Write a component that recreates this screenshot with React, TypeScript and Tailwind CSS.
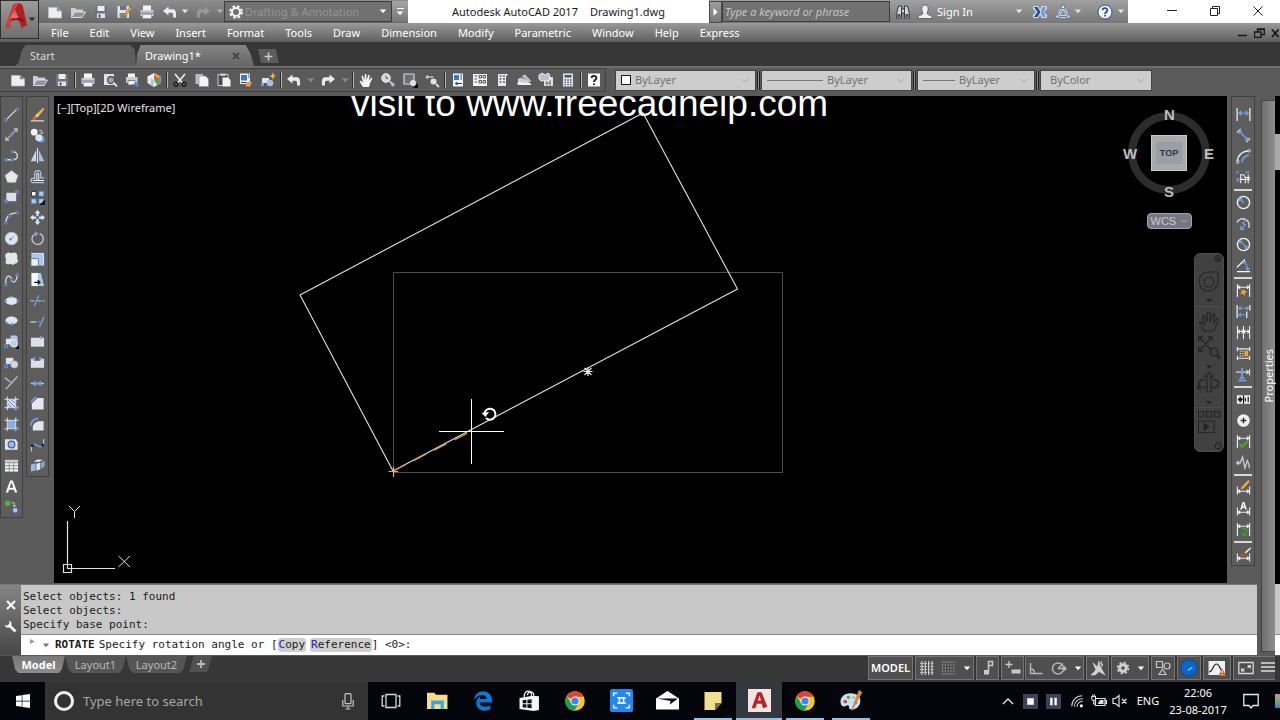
import React from "react";
import { FaWindows } from "react-icons/fa";
import { FaEdgeLegacy } from "react-icons/fa6";

const B = "#6f9fe6";
const L = "#a9c8f2";

const icons: Record<string, React.ReactNode> = {
  new: <path d="M1.5 3.5H10L14.5 7V14H1.5Z M10 3.5V7H14.5" fill="#eceef2" stroke="#b9bcc4" strokeWidth=".8" />,
  open: (
    <>
      <path d="M1 13V4H5L6.5 5.5H13V8" fill="#c9ccd4" />
      <path d="M1.3 13.5L4.5 8H15.5L12 13.5Z" fill="#8e949f" stroke="#e6e8ee" strokeWidth=".9" />
    </>
  ),
  save: (
    <>
      <path d="M2 2H14V14H2Z" fill="#6b7386" />
      <path d="M4.5 2H11.5V7H4.5Z" fill="#eceef2" />
      <path d="M4 9.5H12V14H4Z" fill="#dfe2ea" />
      <path d="M5.5 10.5H7.5V13.5H5.5Z" fill="#4a5164" />
    </>
  ),
  saveas: (
    <>
      <path d="M1.5 2H13V14H1.5Z" fill="#e2e4ea" />
      <path d="M4 2H10.5V6H4Z" fill="#6b7386" />
      <path d="M3.5 9H11V14H3.5Z" fill="#7d8597" />
      <path d="M14.5 2.5L8 10.5L7 13L9.5 11.8L16 4.2Z" fill="#f2b23c" stroke="#6b4a1c" strokeWidth=".6" />
    </>
  ),
  print: (
    <>
      <path d="M4 1.5H12V6H4Z" fill="#f4f5f8" />
      <path d="M1.5 6H14.5V12H1.5Z" fill="#c9ccd6" />
      <path d="M1.5 8.5H14.5V9.6H1.5Z" fill="#7a8090" />
      <path d="M3.5 10.5H12.5V14.5H3.5Z" fill="#f4f5f8" stroke="#7d8597" strokeWidth=".6" />
    </>
  ),
  preview: (
    <>
      <path d="M2 2H12V13H2Z" fill="#dfe2ea" />
      <circle cx="9" cy="8" r="3.4" fill="#9aa3b6" stroke="#3e434e" strokeWidth="1.1" />
      <path d="M11.5 10.5L15 14.5" stroke="#eceef2" strokeWidth="1.8" />
    </>
  ),
  publish: (
    <>
      <path d="M4 1.5H11V5H4Z" fill="#f4f5f8" />
      <path d="M2 5H13.5V11H2Z" fill="#c9ccd6" />
      <path d="M4 8.5H11V13H4Z" fill="#f4f5f8" stroke="#555b69" strokeWidth=".7" />
      <path d="M8 12H12V10L15.5 12.8L12 15.5V13.6H8Z" fill="#4f88dc" />
    </>
  ),
  dwf: (
    <>
      <path d="M8 1L14.5 4.5V11L8 15L1.5 11V4.5Z" fill="#eceef2" />
      <path d="M8 1L14.5 4.5L8 8Z" fill="#e4a33f" />
      <path d="M8 8L14.5 4.5V11L11 13Z" fill="#4fa863" />
      <path d="M8 3.5L11.5 5.5V9L8 7Z" fill="#d95748" />
      <path d="M8 8V15L4.5 12.8V6Z" fill="#b8c7e0" />
    </>
  ),
  cut: (
    <>
      <path d="M3 2L10.5 11M13 2L5.5 11" stroke="#f0f1f5" strokeWidth="1.5" />
      <circle cx="4" cy="12.3" r="2" fill="none" stroke="#15171c" strokeWidth="1.3" />
      <circle cx="12" cy="12.3" r="2" fill="none" stroke="#15171c" strokeWidth="1.3" />
    </>
  ),
  copy: (
    <>
      <path d="M1.5 2H9V12H1.5Z" fill="#b9bdc8" />
      <path d="M5 4H11.5L14.5 7V14.5H5Z" fill="#f2f3f7" stroke="#8a8f9b" strokeWidth=".6" />
    </>
  ),
  paste: (
    <>
      <path d="M2 2.5H12V13.5H2Z" fill="#4b4c50" stroke="#c9ccd6" strokeWidth="1" />
      <path d="M4.5 1.5H9.5V4H4.5Z" fill="#c9ccd6" />
      <path d="M6.5 5.5H12L14.5 8V14.5H6.5Z" fill="#f2f3f7" />
    </>
  ),
  match: (
    <>
      <path d="M2 1.5H12V12H2Z" fill="#f2f3f7" />
      <path d="M3 3H9V8.5H3Z" fill="#3e76c9" />
      <path d="M10 3H11.5M10 5H11.5M3 10.5H9" stroke="#30435f" strokeWidth="1" />
      <path d="M8 10H14L12 15L7.5 14Z" fill="#e39b4a" />
    </>
  ),
  blockedit: (
    <>
      <path d="M2 6H9V11H2Z" fill="#e0e3ec" />
      <circle cx="10" cy="11" r="3.3" fill="#a9bfe6" />
      <path d="M1 11H4V14H1Z" fill={B} />
      <path d="M13 0L13.8 3L16 3.5L13.8 5L13 8L11.8 5.2L9.5 4L12 3Z" fill="#f4b52f" />
    </>
  ),
  undo: <path d="M1 7L6.5 2.5V5.3H10.5C13.5 5.3 14.5 7.5 14 13.5H11C11.2 10 11 8.8 9.5 8.8H6.5V11.5Z" fill="#e9ebf1" />,
  redo: <path d="M15 7L9.5 2.5V5.3H5.5C2.5 5.3 1.5 7.5 2 13.5H5C4.8 10 5 8.8 6.5 8.8H9.5V11.5Z" fill="#e9ebf1" />,
  redoOff: <path d="M15 7L9.5 2.5V5.3H5.5C2.5 5.3 1.5 7.5 2 13.5H5C4.8 10 5 8.8 6.5 8.8H9.5V11.5Z" fill="#98989a" />,
  pan: (
    <path
      d="M5 15L1.5 9.5L2.5 8.5L5 10.5L3.5 4L4.8 3.5L6.5 8L6.8 2L8.3 2L8.6 8L10.4 2.8L11.8 3.2L10.8 8.8L13.2 5.5L14.3 6.3L11.8 12L11 15Z"
      fill="#f4f4f6"
    />
  ),
  zoomrt: (
    <>
      <circle cx="6" cy="6" r="4.3" fill="#d5d8e0" stroke="#eceef2" />
      <path d="M6 3.5V6.300H8.500" stroke="#5c6270" fill="none" />
      <path d="M9.5 9.5L12 11.500" stroke="#c9ccd4" strokeWidth="1.8" />
      <path d="M11.500 10.500L15 11.500L13.500 15L11 13.500Z" fill="#b9bdc8" />
    </>
  ),
  zoomwin: (
    <>
      <path d="M2 2H12V12H2Z" fill="#6b6e75" stroke="#d5d8e0" strokeWidth="1.2" />
      <circle cx="11" cy="11" r="3" fill="#dfe2ea" />
      <path d="M11 16H16V11Z" fill="#0a0a0a" />
    </>
  ),
  zoomprev: (
    <>
      <path d="M0.5 5L4.5 1.5V3.8H10V6.3H4.5V8.5Z" fill="#b9bdc8" stroke="#2b2b2d" strokeWidth=".5" />
      <circle cx="9.5" cy="9.5" r="3" fill="#dfe2ea" />
      <path d="M12 12L15 15" stroke="#dfe2ea" strokeWidth="1.8" />
    </>
  ),
  props: (
    <>
      <path d="M3 1.5H13V14.5H3Z" fill="#f4f5f8" />
      <path d="M4 3H9V8H4Z" fill="#3e76c9" />
      <path d="M10.3 3H12M10.3 5H12M10.3 7H12M5 11.5H12" stroke="#2d3f5f" />
      <path d="M5 11.5L7.5 9.5V13.5Z" fill="#2d3f5f" />
    </>
  ),
  dcenter: (
    <>
      <path d="M1 2H15V14H1Z" fill="#f4f5f8" />
      <path d="M2.5 4H5M2.5 7H5M2.5 10H5M7 3.5H9.5V6H7ZM11 3.5H13.5V6H11ZM7 8.5H9.5V11H7ZM11 8.5H13.5V11H11Z" stroke="#4d5468" fill="none" />
    </>
  ),
  palette: (
    <>
      <path d="M4 2H14L12 5V14H4Z" fill="#e8eaf0" />
      <path d="M5.5 4H7.5M9 4H11M5.5 7H7.5M9 7H11M5.5 10H7.5M9 10H11" stroke="#5c6270" strokeWidth="1.4" />
    </>
  ),
  sheet: (
    <>
      <path d="M1 11.500L3 9L14 11L15.500 13H2.500Z" fill="#f4f5f8" />
      <path d="M2 7.500L5 6L12 10L10 11.500L3 10Z" fill="#c5c9d3" stroke="#f4f5f8" strokeWidth=".7" />
      <path d="M6.500 4L9 3L14.500 9L12 10.500Z" fill="#aeb4c2" stroke="#f4f5f8" strokeWidth=".7" />
    </>
  ),
  markup: (
    <>
      <path d="M6 5H15V14H6Z" fill="#dfe2ea" />
      <path d="M1 3L4 1L7 3L10 1L12 3L11 6L12 8L9 9L6 9L3 9L1 7Z" fill="#b9c0ce" stroke="#fff" strokeWidth=".8" />
      <path d="M2 13L6 9M7 11H13M9 9V14M12 8V14" stroke="#555b69" strokeWidth=".8" />
    </>
  ),
  calc: (
    <>
      <path d="M3 1.5H13V14.5H3Z" fill="#dfe2ea" />
      <path d="M4.5 3H11.5V5.5H4.5Z" fill="#4d5468" />
      <path d="M4.5 8H6M7.3 8H8.8M10 8H11.5M4.5 10.3H6M7.3 10.3H8.8M10 10.3H11.5M4.5 12.6H6M7.3 12.6H8.8M10 12.6H11.5" stroke="#4d5468" strokeWidth="1.3" />
    </>
  ),
  help: (
    <>
      <path d="M2 1.5H14V14.5H2Z" fill="#fafafc" />
      <path d="M5.6 6C5.6 3.2 10.4 3.2 10.4 6C10.4 7.8 8 7.8 8 10M8 11.4V13" fill="none" stroke="#17181c" strokeWidth="1.8" />
    </>
  ),
  line: (
    <>
      <path d="M2 14L14 2" stroke="#d9dbe0" strokeWidth="1.3" />
      <path d="M.8 12.5H3.2V15H.8ZM12.8 1H15.2V3.4H12.8Z" fill="#39598c" stroke={B} strokeWidth=".8" />
    </>
  ),
  xline: (
    <>
      <path d="M2 14L14 2M2 10.5V14H5.5M10.5 2H14V5.5" stroke="#c6c7ca" strokeWidth="1.2" fill="none" />
      <path d="M6.500 7H9V9.500H6.500Z" fill="#39598c" stroke={B} />
    </>
  ),
  pline: (
    <>
      <path d="M2 12.5H9C16 12.5 16 4 9 4" stroke="#d9dbe0" strokeWidth="1.4" fill="none" />
      <path d="M.8 11.3H3.2V13.7H.8ZM7.5 2.8H10V5.2H7.5ZM7.5 11.3H10V13.7H7.5Z" fill="#39598c" stroke={B} strokeWidth=".8" />
    </>
  ),
  polygon: <path d="M8 1.5L15 6.8L12.3 14.5H3.7L1 6.8Z" fill="#e6e8f0" stroke="#9ea3b0" strokeWidth=".6" />,
  rect: (
    <>
      <path d="M2.5 4H13V13H2.5Z" fill="#dcdfe9" />
      <path d="M1 11.8H3.5V14.3H1ZM12.5 2H15V4.5H12.5Z" fill="#39598c" stroke={B} />
    </>
  ),
  arc: (
    <>
      <path d="M2 14C2 7 6 3 14 3" fill="none" stroke="#d9dbe0" strokeWidth="1.4" />
      <path d="M.8 12.5H3.2V15H.8ZM4.3 5H6.8V7.5H4.3ZM12.8 1.8H15.2V4.2H12.8Z" fill="#39598c" stroke={B} strokeWidth=".8" />
    </>
  ),
  circle: (
    <>
      <circle cx="8" cy="8" r="6.7" fill="#e1e5ef" stroke="#b7bccb" />
      <path d="M7 9L11 5" stroke={B} />
      <circle cx="7" cy="8.8" r="1.5" fill={B} />
    </>
  ),
  cloud: (
    <path
      d="M3.5 2C5 1 6.5 2.4 8 2.4C10 1 13.5 1.5 14 4C14.5 6 13.5 7 14.6 9C15.5 12 13.5 13.5 12 13.2C10 15.4 8 14.5 6.5 13.6C4.5 14.8 1.5 14 1.6 11.5C2.8 9.5 2 8 1.4 6C.8 4 2 2.5 3.5 2Z"
      fill="#e4e6ee"
    />
  ),
  spline: (
    <>
      <path d="M2 14C1 2 7 3 8 8C9 13 14 11 14 3" fill="none" stroke="#d9dbe0" strokeWidth="1.4" />
      <path d="M.8 12.5H3.2V15H.8ZM6.8 7H9.2V9.3H6.8ZM12.8 1.8H15.2V4.2H12.8Z" fill="#39598c" stroke={B} strokeWidth=".8" />
    </>
  ),
  ellipse: (
    <>
      <ellipse cx="8" cy="8.5" rx="6.5" ry="4.2" fill="#e1e5ef" />
      <path d="M.5 7.3H3V9.7H.5ZM13 7.3H15.5V9.7H13ZM6.8 3H9.2V5.4H6.8Z" fill={B} />
    </>
  ),
  earc: (
    <>
      <ellipse cx="8" cy="8" rx="6.5" ry="4.2" fill="#e1e5ef" />
      <path d="M2 9.3H4.6V11.8H2ZM7 10.5H9.6V13H7Z" fill={B} />
    </>
  ),
  insert: (
    <>
      <path d="M7 1.5H13L14.5 3V8H7Z" fill={L} />
      <path d="M2 5H9V11H2Z" fill="#dfe2ea" />
      <circle cx="10.5" cy="10" r="4" fill="#c3cde0" stroke="#f0f2f7" strokeWidth=".7" />
      <path d="M.8 11.5H3.8V14.5H.8Z" fill="#2c5aa3" stroke={B} />
      <path d="M12 16H16V12Z" fill="#080808" />
    </>
  ),
  block: (
    <>
      <path d="M2 3H10V9.5H2Z" fill="#dfe2ea" />
      <circle cx="11" cy="10" r="4" fill="#d3d8e5" stroke="#8a90a0" strokeWidth=".6" />
      <path d="M.8 10.5H3.8V13.5H.8Z" fill="#2c5aa3" stroke={B} />
    </>
  ),
  point: (
    <>
      <path d="M1 3L8 8.5L14.5 1.5M8 8.5L2 15" stroke="#c6c7ca" strokeWidth="1.3" fill="none" />
      <circle cx="8.3" cy="8" r="1.6" fill={B} />
    </>
  ),
  hatch: (
    <>
      <path d="M4 4H12V12H4Z" fill="#d5e3f8" />
      <path d="M4 8L8 12M4 4L12 12M8 4L12 8" stroke="#5c80b8" />
      <path d="M3.5 .5V15M12.5 .5V15M.5 3.5H15.5M.5 12.5H15.5" stroke="#e9ebf0" strokeWidth="1" />
      <path d="M11 15L15 11" stroke={B} strokeWidth="1.5" />
    </>
  ),
  gradient: (
    <>
      <path d="M4 4H12V12H4Z" fill="#86aee8" />
      <path d="M3.5 .5V15M12.5 .5V15M.5 3.5H15.5M.5 12.5H15.5" stroke="#e9ebf0" strokeWidth="1" />
      <path d="M11 15L15 11" stroke={B} strokeWidth="1.5" />
    </>
  ),
  region: (
    <>
      <path d="M1 2.5H12L14.5 5V13.5H1Z" fill="#e1e4ed" />
      <circle cx="8" cy="8" r="3.6" fill="#9dbbe8" stroke="#3b5b8f" strokeWidth="1.2" />
    </>
  ),
  table: (
    <>
      <path d="M1 2H15V14.5H1Z" fill="#f2f3f6" />
      <path d="M1 5H15M1 8.2H15M1 11.4H15M5.6 5V14.5M10.3 5V14.5" stroke="#7a7f8b" strokeWidth=".9" />
      <path d="M1 2H15V4.3H1Z" fill="#c8ccd6" />
    </>
  ),
  mtext: <path d="M1.8 14.5L6.6 1.5H9.4L14.2 14.5H11.6L10.6 11.4H5.4L4.4 14.5ZM6 9.4H10L8 3.6Z" fill="#fafafa" />,
  addsel: (
    <>
      <circle cx="4" cy="4.5" r="3" fill="#5cae3a" />
      <path d="M8 4H11V8M9.5 6.5L11 8.5L12.6 6.5" stroke="#c6c7ca" fill="none" />
      <circle cx="12" cy="12" r="3" fill={L} stroke="#345b98" />
    </>
  ),
  erase: (
    <>
      <path d="M1 14.8H15" stroke="#fff" />
      <path d="M14 .8L15.3 2L9.5 9.5L7 7.5Z" fill="#f1b44a" />
      <path d="M7 7.5L9.5 9.5L7.5 11L5.8 9.4Z" fill="#f7e7d0" />
      <path d="M5.8 9.4L7.5 11C7 13.5 4.5 14.5 2.5 13.5C3.5 12.5 3 9.8 5.8 9.4Z" fill="#d6702c" />
    </>
  ),
  copyobj: (
    <>
      <circle cx="4.5" cy="4.5" r="3.6" fill="#f2f3f7" />
      <circle cx="12" cy="12" r="3.6" fill="#6e9ad8" />
      <circle cx="9.5" cy="10.5" r="3.8" fill="#d7e4f7" />
      <path d="M9.5 2.5H12.5V6M11 4.8L12.5 6.5L14 4.8" stroke="#c6c7ca" fill="none" />
    </>
  ),
  mirror: (
    <>
      <path d="M6.5 2V14H.8Z" fill="#cdd5e1" />
      <path d="M9.5 2V14H15.2Z" fill="#a8c0de" />
      <path d="M8 0V16" stroke="#dfe2ea" strokeWidth="1.2" />
    </>
  ),
  offset: (
    <>
      <path d="M15 14.500H3C.5 14.500 .5 10 3 10H5V5C5 .5 11.5 .5 11.5 5V9.5H15" fill="none" stroke={L} strokeWidth="1.3" />
      <path d="M15 12.300H4C3 12.300 3 12 7.3 12V5.5C7.3 3.8 9.3 3.8 9.3 5.5V12" fill="none" stroke="#eceef2" strokeWidth="1.1" />
    </>
  ),
  array: (
    <>
      <path d="M1.5 1.5H6.5V6.5H1.5Z" fill="#f4f5f8" stroke="#2b2b2b" />
      <path d="M9.5 1.5H14.5V6.5H9.5ZM1.5 9.5H6.5V14.5H1.5ZM9.5 9.5H14.5V14.5H9.5Z" fill={L} stroke="#5d8bd0" strokeWidth=".7" />
      <path d="M10 16H16V10Z" fill="#080808" />
    </>
  ),
  move: (
    <>
      <path d="M8 0L11 3.5H9.2V6.8H12.5V5L16 8L12.5 11V9.2H9.2V12.5H11L8 16L5 12.5H6.8V9.2H3.5V11L0 8L3.5 5V6.8H6.8V3.5H5Z" fill="#e6e8ee" />
      <path d="M6.3 6.3H9.7V9.7H6.3Z" fill="#3e76c9" />
    </>
  ),
  rotate: (
    <>
      <path d="M5 3.2A6 6 0 1 0 10.5 2.8" fill="none" stroke="#c9cbd0" strokeWidth="1.4" />
      <path d="M5 .5L9.5 2.5L5.5 6Z" fill={B} />
    </>
  ),
  scale: (
    <>
      <path d="M1.5 1.5H14.5V14.5H1.5Z" fill={L} />
      <path d="M1.5 1.5H14.5V14.5" fill="none" stroke="#dfeafa" />
      <path d="M1 7H9V15H1Z" fill="#eceef4" stroke="#49678f" strokeWidth=".8" />
    </>
  ),
  stretch: (
    <>
      <path d="M9 1H11.5L15 15H9Z" fill={L} />
      <path d="M1.5 1H9V15H1.5Z" fill="#f6f7fa" />
      <path d="M4.5 11H10.5M8.2 8.8L10.7 11L8.2 13.2" stroke="#0c0c0c" strokeWidth="1.3" fill="none" />
    </>
  ),
  trim: (
    <>
      <path d="M.5 8.5H6M8 8.5H15.5" stroke="#9db8de" strokeWidth="1.3" strokeDasharray="4 1.2" />
      <path d="M4.5 14L9.5 2.5" stroke={B} strokeWidth="1.4" />
    </>
  ),
  extend: (
    <>
      <path d="M.5 8.5H6" stroke="#d9dbe0" strokeWidth="1.3" />
      <path d="M6 8.5H11" stroke={B} strokeWidth="1.3" strokeDasharray="2 1" />
      <path d="M10 14L15 3" stroke={B} strokeWidth="1.5" />
    </>
  ),
  breakpt: (
    <>
      <path d="M1 4H15V13.5H1Z" fill="#dcdfe9" />
      <path d="M10.5 2.3H13V5H10.5Z" fill={B} />
    </>
  ),
  brk: (
    <>
      <path d="M1 4H4V6H11V4H15V13.5H1Z" fill="#dcdfe9" />
      <path d="M3.3 2.3H5.8V5H3.3ZM9.8 2.3H12.3V5H9.8Z" fill={B} />
    </>
  ),
  join: (
    <>
      <path d="M1 8H15" stroke="#c6c7ca" strokeWidth="1.5" />
      <path d="M4.5 5.5L8 8L4.5 10.5ZM11.5 5.5L8 8L11.5 10.5Z" fill={B} stroke={B} />
    </>
  ),
  chamfer: (
    <>
      <path d="M2 14.5V8L8 2H14.5V14.5Z" fill="#e4e6ee" />
      <path d="M1 6.5L6.5 1" stroke={B} strokeWidth="1.7" />
    </>
  ),
  fillet: (
    <>
      <path d="M3 14.5V11C3 7 7 4.5 10 4.5H14.5V14.5Z" fill="#e4e6ee" />
      <path d="M1 9C1 4 5 1.5 9 1.5" stroke={B} strokeWidth="2" fill="none" />
    </>
  ),
  blend: (
    <>
      <path d="M1.5 14.5V9M14.5 1V7" stroke="#c6c7ca" strokeWidth="1.2" />
      <path d="M2.5 8C6 3 9 13 13.5 8" fill="none" stroke={B} strokeWidth="1.6" />
      <circle cx="2.5" cy="8" r="1.6" fill="#10264d" />
      <circle cx="13.5" cy="7.5" r="1.6" fill="#10264d" />
    </>
  ),
  explode: (
    <>
      <path d="M1 7L6 5.5V13L1 14.5Z" fill="#9bbbe0" />
      <path d="M6.8 6L11 5V12L6.8 13.5Z" fill="#dde8f5" />
      <path d="M4 4L8 1.5L13.5 2L10 4Z" fill="#e9eef6" />
      <path d="M12 5L15.5 3V9L12 11.5Z" fill="#89aad2" />
    </>
  ),
};

const dimBase = <path d="M1.5 1V15M14.5 1V15M2 4.5H14M4.5 2.8L2 4.5L4.5 6.2M11.5 2.8L14 4.5L11.5 6.2" stroke="#eceef2" fill="none" strokeWidth="1.2" />;
const dimLow = <path d="M1.5 7V15.5M14.5 7V15.5M2 12H14M4.5 10.5L2 12L4.5 13.5M11.5 10.5L14 12L11.5 13.5" stroke="#eceef2" fill="none" strokeWidth="1.2" />;

const dims: Record<string, React.ReactNode> = {
  linear: (
    <>
      <path d="M1.2 1V15M14.8 1V15" stroke="#f2f3f6" strokeWidth="1.3" />
      <path d="M3 6.5H13M5.5 4L2.5 6.5L5.5 9ZM10.5 4L13.5 6.5L10.5 9Z" stroke={B} fill={B} />
    </>
  ),
  aligned: (
    <>
      <path d="M1 5L5 1M11 15L15 11" stroke="#eceef2" strokeWidth="1.2" />
      <path d="M3.5 3.5L12.5 12.5M3.5 6.5V3.5H6.5M12.5 9.5V12.5H9.5" stroke={B} strokeWidth="1.5" fill="none" />
    </>
  ),
  arclen: (
    <>
      <path d="M1.5 14C1.5 7 6 2.5 13.5 2" stroke="#f2f3f6" strokeWidth="1.5" fill="none" />
      <path d="M6.5 14C6.5 10 9 7.5 14 6.5" stroke={B} strokeWidth="1.8" fill="none" />
      <path d="M.8 12.5H3V15H.8ZM12.8 .8H15.2V3H12.8Z" fill="#444" stroke="#f2f3f6" strokeWidth=".8" />
    </>
  ),
  ordinate: (
    <>
      <path d="M5 14V5H8L10 8H15M5 10H15M10 8V14M13 5V14" stroke="#eceef2" fill="none" strokeWidth="1.2" />
      <path d="M1 1V4M3 1L1.5 3M1 9H3V12H1ZM10 1L14.5 4M14.5 1L10 4" stroke={B} fill="none" />
    </>
  ),
  radius: (
    <>
      <circle cx="8" cy="8" r="6.5" fill="none" stroke="#f2f3f6" strokeWidth="1.5" />
      <path d="M8.500 8.500L4.5 4.5M4 7V4H7" stroke={B} strokeWidth="1.4" fill="none" />
    </>
  ),
  jogged: (
    <>
      <path d="M1 7A6.5 6.5 0 1 1 13.5 12.5" fill="none" stroke="#d8dae0" strokeWidth="1.5" />
      <path d="M11 4L7 8L10 9.5L5.5 14M5 10.5V14.3H9" stroke={B} strokeWidth="1.3" fill="none" />
    </>
  ),
  diameter: (
    <>
      <circle cx="8" cy="8" r="6.5" fill="none" stroke="#f2f3f6" strokeWidth="1.5" />
      <path d="M4.5 4.5L11.5 11.5M4.3 7V4.3H7M11.7 9V11.7H9" stroke={B} strokeWidth="1.4" fill="none" />
    </>
  ),
  angular: (
    <>
      <path d="M1 10L9.5 1.5M1 14.5H15" stroke="#f2f3f6" strokeWidth="1.5" />
      <path d="M8 4C11 6 12.5 9 12.5 13M8 6.5V3.8H11M10.3 10.5L12.5 13L14.5 10.5" stroke={B} strokeWidth="1.3" fill="none" />
    </>
  ),
  quick: (
    <>
      {dimBase}
      <path d="M8 6L9.5 8.3L12 9L9.8 10.5L9.5 13.5L7.5 11.5L4.5 12L6 9.8L5 7.5L7.5 8.2Z" fill="#f2a52b" />
    </>
  ),
  baseline: (
    <>
      <path d="M1.2 1V15M14.8 1V7M11.5 8V15" stroke="#f2f3f6" strokeWidth="1.3" />
      <path d="M3 4.5H14M3 11.5H11M5 2.8L2.7 4.5L5 6.2ZM11.5 2.8L13.8 4.5L11.5 6.2ZM5 9.8L2.7 11.5L5 13.2Z" stroke={B} fill={B} />
    </>
  ),
  continue: <path d="M1.5 1V15M8 1V15M14.5 1V15M2 7H14M4 5L2 7L4 9M6 5L8 7L6 9M10 5L8 7L10 9M12 5L14 7L12 9" stroke="#eceef2" fill="none" strokeWidth="1.1" />,
  space: (
    <>
      <path d="M1.5 1V5.5M14.5 1V5.5M1.5 3H14.5M1.5 10.5V15M14.5 10.5V15M1.5 13H14.5" stroke="#eceef2" strokeWidth="1.2" />
      <path d="M9 5H13V11H9Z" fill="#f2a52b" />
      <path d="M4 5.5H8M4 8H8M4 10.5H8" stroke="#eceef2" strokeDasharray="1.4 1" />
    </>
  ),
  dimbreak: (
    <>
      <path d="M0 5.5H15M14.5 2V9M11 3.5L14 5.5L11 7.5" stroke="#d5d7dc" strokeWidth="1.2" fill="none" />
      <path d="M6.5 1V13M2.5 14.5H11M4 12H9" stroke={B} strokeWidth="2" />
    </>
  ),
  tolerance: (
    <>
      <path d="M1 3.5H15V12.5H1Z" fill="#f4f4f4" />
      <path d="M2 8H7M4.5 5V11M8 3.5V12.5M10 6V10M13 5V11" stroke="#101010" strokeWidth="1.3" />
      <circle cx="4.5" cy="8" r="1.8" fill="none" stroke="#101010" />
    </>
  ),
  center: (
    <>
      <circle cx="8" cy="8" r="6.7" fill="#eeeff1" />
      <path d="M8 5V11M5 8H11" stroke="#222" strokeWidth="1.5" />
    </>
  ),
  inspect: (
    <>
      {dimBase}
      <path d="M3.5 10L6.5 13.5L13 7" stroke="#4aa52c" strokeWidth="2.2" fill="none" />
    </>
  ),
  jogline: <path d="M.5 8.5H4.5L7 2L9.5 14L12 6L14 10.5V14M3 6.5L.8 8.5L3 10.5" stroke="#c9cbd0" fill="none" strokeWidth="1.4" />,
  dimedit: (
    <>
      {dimLow}
      <path d="M13 0L14.8 1.5L8 9L5 10L6 7.5Z" fill="#f0ab43" />
    </>
  ),
  dimtedit: (
    <>
      {dimLow}
      <path d="M4.5 9L7 1H9L11.5 9H9.7L9.2 7.3H6.8L6.3 9ZM7.2 5.8H8.8L8 3Z" fill="#fff" />
    </>
  ),
  dimupdate: (
    <>
      {dimBase}
      <path d="M6 8A3.5 3.5 0 0 1 12.5 8.5L13.5 7.5V11H10L11 10A2 2 0 0 0 8 9ZM6.5 11H10L9 12A2 2 0 0 0 12.5 12C12 15.5 8 15.5 7 13.5L6.5 14Z" fill="#3f9a28" />
    </>
  ),
  dimstyle: (
    <>
      {dimLow}
      <path d="M15 .5L16 1.5L10.5 7L9 5.8Z" fill="#f4efe8" />
      <path d="M9 5L11 7.2C10 10 7 11 4 10C5.5 9 5.5 5.5 9 5Z" fill="#a2582a" />
    </>
  ),
};

function Svg({ children, size = 16, box = 16 }: { children: React.ReactNode; size?: number; box?: number }) {
  return (
    <svg width={size} height={size} viewBox={`0 0 ${box} ${box}`} aria-hidden="true" className="shrink-0">
      {children}
    </svg>
  );
}

function Caret({ color = "#e4e4e4" }: { color?: string }) {
  return (
    <svg width="8" height="5" viewBox="0 0 8 5" aria-hidden="true" className="shrink-0">
      <path d="M.8 .5H7.2L4 4.300Z" fill={color} />
    </svg>
  );
}

function ToolCell({ name }: { name: string }) {
  return (
    <button aria-label={name} className="flex h-6 w-[22px] shrink-0 items-center justify-center">
      <Svg>{icons[name]}</Svg>
    </button>
  );
}

function Sep() {
  return <span className="mx-px h-4 w-[2px] shrink-0 border-r border-[#b4b4b4] bg-[#2c2c2c]" />;
}

function Grip() {
  return <div className="mx-auto h-[4px] w-[13px] shrink-0 bg-[radial-gradient(#a8a8a8_40%,transparent_45%)] bg-[length:2px_2px]" />;
}

const menus = ["File", "Edit", "View", "Insert", "Format", "Tools", "Draw", "Dimension", "Modify", "Parametric", "Window", "Help", "Express"];

function Header() {
  return (
    <header className="flex h-[42px] shrink-0 bg-linear-to-b from-[#8c8c8c] from-55% to-[#606060]">
      <button aria-label="Application menu" className="flex h-[39px] w-[39px] shrink-0 items-center justify-between border border-[#2e2e2e] bg-linear-to-b from-[#9b9b9b] to-[#6e6e6e] pr-[2px] pl-[3px]">
        <svg width="24" height="30" viewBox="0 0 24 30" aria-hidden="true" className="-mt-2">
          <path d="M1 27L9 3L15 2L7.5 19L6 27Z" fill="#d6393b" />
          <path d="M15 2L18.5 4L23 24L17.5 27L15 19L11 8Z" fill="#b01f24" />
          <path d="M6.5 20L11 15L19 18L20 21L12 19Z" fill="#8c1519" />
          <path d="M13 3L9.5 12L15 16L12 17.5L6.5 16.5Z" fill="#ef6b68" />
        </svg>
        <Caret color="#2b2b2b" />
      </button>
      <div className="flex min-w-0 flex-1 flex-col">
        <div className="flex h-[23px] shrink-0 bg-white">
          <div className="flex w-[369px] shrink-0 items-center bg-linear-to-b from-[#8d8d8d] to-[#686868] pl-1">
            {["new", "open", "save", "saveas", "print", "undo"].map((n) => (
              <button key={n} aria-label={"Quick " + n} className="flex w-[23px] items-center justify-center">
                <Svg>{icons[n]}</Svg>
              </button>
            ))}
            <Caret />
            <button aria-label="Quick redo" className="flex w-[27px] items-center justify-center">
              <Svg>{icons.redoOff}</Svg>
            </button>
            <Caret color="#b0b0b0" />
            <label className="flex h-[21px] min-w-0 flex-1 items-center gap-[2px] border border-[#3c3c3c] bg-[#717171] px-1">
              <svg width="14" height="14" viewBox="0 0 14 14" aria-hidden="true" className="shrink-0">
                <circle cx="7" cy="7" r="5.8" fill="none" stroke="#f4f4f4" strokeWidth="2.2" strokeDasharray="2.6 2" />
                <circle cx="7" cy="7" r="4" fill="none" stroke="#f4f4f4" strokeWidth="2" />
              </svg>
              <select aria-label="Workspace" className="min-w-0 flex-1 appearance-none bg-transparent text-[11px] leading-4 text-[#959595] outline-none">
                <option>Drafting &amp; Annotation</option>
              </select>
              <Caret color="#fff" />
            </label>
            <button aria-label="Customize toolbar" className="flex h-[21px] w-4 flex-col items-center justify-center gap-[2px] bg-linear-to-b from-[#a5a5a5] to-[#777]">
              <span className="h-px w-[7px] bg-white" />
              <Caret color="#fff" />
            </button>
          </div>
          <h1 className="flex flex-1 items-center justify-center gap-3 text-[11px] leading-4 text-[#1a1a1a]">
            <span>Autodesk AutoCAD 2017</span>
            <span>Drawing1.dwg</span>
          </h1>
          <div className="flex w-[419px] shrink-0 items-center bg-linear-to-b from-[#a0a0a0] to-[#787878]">
            <button aria-label="Collapse search" className="flex h-[22px] w-[13px] items-center justify-center border border-[#4a4a4a]">
              <svg width="5" height="8" viewBox="0 0 5 8" aria-hidden="true">
                <path d="M.5 0V8L4.5 4Z" fill="#fff" />
              </svg>
            </button>
            <input aria-label="Search help" placeholder="Type a keyword or phrase" className="h-[21px] w-[168px] border border-[#3c3c3c] bg-[#717171] px-[2px] text-[11px] leading-4 italic outline-none placeholder:text-[#c4c4c4]" />
            <button aria-label="Search" className="flex w-[25px] justify-center">
              <Svg>
                <path d="M2 8L3.5 2H6.5V14H1.5ZM9.5 2H12.5L14 8L14.5 14H9.5ZM6.5 5H9.5V9H6.5Z" fill="#d4d7de" stroke="#34373d" strokeWidth="1" />
                <path d="M2.5 10H5.5V13H2.5ZM10.5 10H13.5V13H10.5Z" fill="#4b4f58" />
              </Svg>
            </button>
            <button className="flex items-center gap-1 pl-[2px] text-[11px] leading-4 text-white">
              <Svg>
                <path d="M8 1C4.5 1 4.3 5 5.5 8C6.3 10 5.5 10.5 3 11.3C1 12 1 13 1 14.5H15C15 13 15 12 13 11.3C10.5 10.5 9.7 10 10.5 8C11.7 5 11.5 1 8 1Z" fill="#eef0f4" stroke="#3f444d" strokeWidth=".7" />
              </Svg>
              Sign In
            </button>
            <span className="flex flex-1 justify-end pr-[6px]">
              <Caret />
            </span>
            <button aria-label="Exchange apps" className="flex w-[22px] justify-center">
              <Svg>
                <path d="M1 2H6L8 5L10 2H15V5L12 8L15 11V14H10L8 11L6 14H1V11L4 8L1 5Z" fill="#c9d8f0" />
                <path d="M2 3H5.5L8.5 8L5.5 13H2L5.5 8Z" fill="#2a4f92" />
                <path d="M14 3H11L9.5 5.5V10.5L11 13H14L11.5 8Z" fill="#6f93cb" />
              </Svg>
            </button>
            <button aria-label="Autodesk 360" className="flex w-[23px] justify-center">
              <Svg>
                <path d="M8 3L13 12.5H3Z" fill="none" stroke="#e4ebf7" strokeWidth="2.600" strokeLinejoin="round" />
                <path d="M8 3L13 12.5H3Z" fill="none" stroke="#46628f" strokeWidth=".8" strokeLinejoin="round" />
                <path d="M6.500 1.500H9.500V4.500H6.500ZM1 11H4V14H1ZM12 11H15V14H12Z" fill="#e4ebf7" stroke="#46628f" strokeWidth=".7" />
              </Svg>
            </button>
            <Caret />
            <button aria-label="Help" className="ml-3 flex w-[22px] justify-center">
              <Svg>
                <circle cx="8" cy="8" r="7" fill="#f2f5fb" stroke="#2d4f8c" />
                <path d="M5.6 6.2C5.6 3.5 10.4 3.5 10.4 6.2C10.4 8 8 8 8 10M8 11V12.6" fill="none" stroke="#264f9c" strokeWidth="1.8" />
              </Svg>
            </button>
            <span className="mr-[3px] ml-px">
              <Caret />
            </span>
          </div>
          <div className="flex w-[152px] shrink-0 items-center pl-[22px]">
            <button aria-label="Minimize" className="flex w-[43px] justify-center pb-px">
              <svg width="10" height="10" viewBox="0 0 10 10"><path d="M0 4.500H10" stroke="#222" /></svg>
            </button>
            <button aria-label="Restore" className="flex w-[43px] justify-center pb-px">
              <svg width="10" height="10" viewBox="0 0 10 10"><path d="M.5 2.5H7.5V9.5H.5ZM2.5 2.5V.5H9.5V7.5H7.5" stroke="#222" fill="none" /></svg>
            </button>
            <button aria-label="Close" className="flex w-[43px] justify-center pb-px">
              <svg width="10" height="10" viewBox="0 0 10 10"><path d="M.5 .5L9.5 9.5M9.5 .5L.5 9.5" stroke="#222" /></svg>
            </button>
          </div>
        </div>
        <nav className="flex h-[19px] items-center gap-px bg-linear-to-b from-[#9a9a9a] to-[#5f5f5f] pl-[2px]">
          {menus.map((m) => (
            <button key={m} className="px-[10px] text-[11px] leading-4 text-white">
              {m}
            </button>
          ))}
          <div className="ml-auto flex items-center gap-[6px]">
            <button aria-label="Minimize drawing"><svg width="10" height="10" viewBox="0 0 10 10"><path d="M0 7.5H9" stroke="#151515" strokeWidth="1.500" /></svg></button>
            <button aria-label="Restore drawing"><svg width="11" height="10" viewBox="0 0 11 10"><path d="M.5 4H7V9.5H.5ZM3.5 4V.8H10.3V6.5H7M3.5 1.5H10" stroke="#151515" fill="none" strokeWidth="1.3" /></svg></button>
            <button aria-label="Close drawing"><svg width="9" height="10" viewBox="0 0 9 10"><path d="M1 1.5L7.5 9M7.5 1.5L1 9" stroke="#151515" strokeWidth="1.8" /></svg></button>
          </div>
        </nav>
      </div>
    </header>
  );
}

function FileTabs() {
  return (
    <div className="flex h-6 shrink-0 items-end bg-[#373737] pl-[15px] text-[11px] leading-4">
      <button className="h-[21px] w-[121px] bg-[#5e5e5e] pl-[15px] text-left text-[#d8d8d8] [clip-path:polygon(0_100%,3%_85%,6%_20%,9%_0,95%_0,99%_20%,100%_100%)]">Start</button>
      <div className="flex h-[21px] w-[118px] items-center justify-between bg-linear-to-b from-[#858585] to-[#666] pr-[14px] pl-[9px] text-white [clip-path:polygon(0_100%,1%_40%,4%_0,93%_0,97%_40%,100%_100%)]">
        <button>Drawing1*</button>
        <button aria-label="Close Drawing1">
          <svg width="8" height="8" viewBox="0 0 8 8"><path d="M1 1L7 7M7 1L1 7" stroke="#454545" strokeWidth="1.8" /></svg>
        </button>
      </div>
      <button aria-label="New tab" className="mb-[3px] ml-1 flex h-[14px] w-[21px] items-center justify-center bg-[#5c5c5c] [clip-path:polygon(0_0,85%_0,100%_100%,15%_100%)]">
        <svg width="9" height="9" viewBox="0 0 9 9"><path d="M4.5 .5V8.500M.5 4.5H8.500" stroke="#c9c9c9" strokeWidth="1.600" /></svg>
      </button>
    </div>
  );
}

function PropSelect({ label, value, lead, className }: { label: string; value: string; lead?: React.ReactNode; className: string }) {
  return (
    <label className={"flex h-[21px] shrink-0 items-center border border-[#454545] bg-[#cdcdcd] pr-[6px] pl-[5px] " + className}>
      {lead}
      <select aria-label={label} className="min-w-0 flex-1 appearance-none bg-transparent text-[11px] leading-4 text-[#727272] outline-none">
        <option>{value}</option>
      </select>
      <svg width="8" height="5" viewBox="0 0 8 5" aria-hidden="true"><path d="M.8 .8L4 4L7.2 .8" stroke="#a6a6a6" fill="none" /></svg>
    </label>
  );
}

function DoubleBar() {
  return <span className="mx-px h-[19px] w-[3px] shrink-0 border-x border-[#222] bg-[#8a8a8a]" />;
}

function Toolbar() {
  const group = (names: string[]) => names.map((n) => <ToolCell key={n} name={n} />);
  return (
    <div className="flex h-[30px] shrink-0 items-center border-t-2 border-[#6e6e6e] bg-[#5a5a5a] pb-1">
      <div className="flex h-6 items-center border border-l-0 border-[#404040]">
        <span className="ml-[2px] h-[14px] w-[5px] bg-[radial-gradient(#999_40%,transparent_45%)] bg-[length:2px_2px]" />
        {group(["new", "open", "save"])}
        <Sep />
        {group(["print", "preview", "publish", "dwf"])}
        <Sep />
        {group(["cut", "copy", "paste", "match", "blockedit"])}
        <Sep />
        {group(["undo"])}
        <span className="flex w-3 justify-center"><Caret color="#8e8e8e" /></span>
        {group(["redo"])}
        <span className="flex w-3 justify-center"><Caret color="#8e8e8e" /></span>
        <Sep />
        {group(["pan", "zoomrt", "zoomwin", "zoomprev"])}
        <Sep />
        {group(["props", "dcenter", "palette", "sheet", "markup", "calc"])}
        <Sep />
        {group(["help"])}
      </div>
      <span className="mx-[2px] h-[14px] w-[5px] bg-[radial-gradient(#999_40%,transparent_45%)] bg-[length:2px_2px]" />
      <PropSelect label="Color" value="ByLayer" className="w-[141px]" lead={<span className="mr-[4px] h-[10px] w-[10px] border border-[#1c1c1c] bg-white" />} />
      <DoubleBar />
      <PropSelect label="Linetype" value="ByLayer" className="w-[151px]" lead={<span className="mr-[4px] h-px w-[56px] bg-[#777]" />} />
      <DoubleBar />
      <PropSelect label="Lineweight" value="ByLayer" className="w-[118px]" lead={<span className="mr-[4px] h-px w-[32px] bg-[#777]" />} />
      <DoubleBar />
      <PropSelect label="Plot style" value="ByColor" className="w-[112px]" lead={<span className="w-[4px]" />} />
    </div>
  );
}

const drawTools = ["line", "xline", "pline", "polygon", "rect", "arc", "circle", "cloud", "spline", "ellipse", "earc", "insert", "block", "point", "hatch", "gradient", "region", "table", "mtext", "addsel"];
const modifyTools = ["erase", "copyobj", "mirror", "offset", "array", "move", "rotate", "scale", "stretch", "trim", "extend", "breakpt", "brk", "join", "chamfer", "fillet", "blend", "explode"];
const dimGroups = [
  ["linear", "aligned", "arclen", "ordinate"],
  ["radius", "jogged", "diameter", "angular"],
  ["quick", "baseline", "continue", "space", "dimbreak"],
  ["tolerance", "center", "inspect", "jogline"],
  ["dimedit", "dimtedit", "dimupdate"],
  ["dimstyle"],
];

function ToolColumn({ label, names, className }: { label: string; names: string[]; className: string }) {
  return (
    <div role="toolbar" aria-label={label} className={"flex w-[23px] shrink-0 flex-col border border-[#404040] bg-[#5d5d5d] pt-[3px] " + className}>
      <Grip />
      {names.map((n) => (
        <button key={n} aria-label={n} className="flex min-h-0 flex-1 items-center justify-center">
          <Svg size={15}>{icons[n]}</Svg>
        </button>
      ))}
    </div>
  );
}

function NavBar() {
  const s = "#262626";
  return (
    <div className="absolute top-[157px] right-[3px] flex h-[199px] w-[30px] flex-col items-center rounded-md border border-[#4c4c4c] bg-[#414141]">
      <svg width="28" height="197" viewBox="0 0 28 197" fill="none" stroke={s} strokeWidth="1.1" aria-hidden="true">
        <circle cx="23" cy="4.5" r="3" />
        <path d="M21.5 3L24.5 6M24.5 3L21.5 6" />
        <path d="M14 18H23V28A9.5 9.5 0 1 1 14 18Z" />
        <circle cx="14" cy="28" r="5" />
        <path d="M12 45.5H16L14 47.5Z" fill={s} />
        <path d="M2 52.5H26M2 153.5H26" stroke="#4d4d4d" />
        <path d="M9 77L4.5 69L6.5 68L10 71L7.5 62L9.5 61.5L12 68L12.5 58.5H14.8L15 68L18 60L20 60.7L18.5 69.5L22 64.5L23.5 66L20 74L18.5 77Z" />
        <path d="M4 83L17 97M17 83L4 97M4 87V83H8M13 83H17V87M4 93V97H8" strokeWidth="1.4" />
        <circle cx="19" cy="98" r="4" strokeWidth="1.5" />
        <path d="M22 101L25 105" strokeWidth="2.2" />
        <path d="M12 111.5H16L14 113.5Z" fill={s} />
        <path d="M14 118.5L18 122.5H16V138H12V122.5H10Z" />
        <path d="M10 125C2 127 2 132 8 133.500H11M18 125C26 127 26 133 16 134M5 130.500L2.500 133.500L6 136" strokeWidth="1.5" />
        <path d="M12 147.5H16L14 149.5Z" fill={s} />
        <path d="M3.5 157.5H8.5V163H3.5ZM11.5 157.5H16.5V163H11.5ZM19.5 157.5H24.5V163H19.5ZM3.5 167H19V178.5H3.5Z" />
        <path d="M9 169.5V176L14 172.8Z" fill={s} />
        <circle cx="23" cy="192" r="3" />
      </svg>
    </div>
  );
}

function ViewCube() {
  return (
    <div className="absolute top-2 right-[10px] flex w-[96px] flex-col items-center font-['Liberation_Sans',sans-serif]">
      <div className="relative flex h-[98px] w-[96px] items-center justify-center text-[15px] leading-none font-bold text-[#bdbdbd]">
        <div className="flex h-[82px] w-[82px] items-center justify-center rounded-full border-[8px] border-[#2c2c2c]">
          <button className="flex h-9 w-9 items-center justify-center border border-[#c8c8c8] bg-[#a9a9a9]">
            <span className="bg-[#9a9ea6] px-[4px] py-[6px] text-[9px] leading-[10px] text-[#34373d]">TOP</span>
          </button>
        </div>
        <span className="absolute top-[3px] left-[43px]">N</span>
        <span className="absolute bottom-[3px] left-[43px]">S</span>
        <span className="absolute top-[42px] left-[2px]">W</span>
        <span className="absolute top-[42px] right-[3px]">E</span>
      </div>
      <button className="mt-[11px] flex h-4 w-[45px] items-center justify-between rounded-[4px] border border-[#a5a5b0] bg-[#777781] px-[3px] text-[11px] leading-none text-[#c8c8d0]">
        WCS
        <svg width="8" height="5" viewBox="0 0 8 5" aria-hidden="true"><path d="M0 1.5H8L4 3.5Z" fill="#9a9aa6" /></svg>
      </button>
    </div>
  );
}

function Canvas() {
  return (
    <main className="relative min-w-0 flex-1 overflow-hidden bg-black">
      <svg className="absolute inset-0 h-full w-full" fill="none" stroke="#e2e2e2" aria-label="Drawing area">
        <path d="M339.5 176.5H728.5V376.5H339.5Z" stroke="#4c4c4c" />
        <path d="M339 375L246 199L589 17L683.5 193Z" strokeWidth="1.1" />
        <path d="M339 375L417 335.500" stroke="#d89a3c" strokeWidth="1.3" strokeDasharray="14 9" />
        <path d="M334.500 375.500H344M339.500 371V381" stroke="#e8b060" strokeWidth="1.2" />
        <path d="M385 335.500H450M417.5 303V368" stroke="#fff" />
        <path d="M432 322A5.5 5.5 0 1 0 430.5 317.5" stroke="#fff" strokeWidth="2" />
        <path d="M427.5 317L435 316L431.5 321Z" fill="#fff" stroke="none" />
        <path d="M529.5 275.5H538.5M534 271V280M530.5 272L537.5 279M537.5 272L530.5 279" strokeWidth="1.2" />
        <path d="M13.5 425V472.5H61M9.5 468.5H17.5V476.5H9.5Z" strokeWidth="1.2" />
        <path d="M15 410L20.5 415.5L26 410M20.5 415.5V422M64.5 460L76 471M76 460L64.5 471" />
      </svg>
      <p className="absolute -top-[13px] left-[297px] font-['Liberation_Sans',sans-serif] text-[37px] leading-[42px] whitespace-nowrap text-white">visit to www.freecadhelp.com</p>
      <p className="absolute top-1 left-[3px] text-[11px] leading-4 text-[#e4e4e4]">[−][Top][2D Wireframe]</p>
      <ViewCube />
      <NavBar />
    </main>
  );
}

function CommandLine() {
  return (
    <section aria-label="Command line" className="flex h-[71px] shrink-0 border-t border-[#7a7a7a] font-['DejaVu_Sans_Mono',monospace] text-[11px] leading-[14px] text-[#1b1b1b]">
      <div className="flex w-[21px] shrink-0 flex-col items-center bg-linear-to-b from-[#858585] to-[#474747] pt-[4px]">
        <Grip />
        <button aria-label="Close command line" className="mt-[7px]">
          <svg width="10" height="10" viewBox="0 0 10 10"><path d="M1 1L9 9M9 1L1 9" stroke="#fff" strokeWidth="2" /></svg>
        </button>
        <button aria-label="Customize command line" className="mt-[10px]">
          <svg width="13" height="13" viewBox="0 0 13 13">
            <path d="M4.5 4.5L11.5 11.5" stroke="#f2f2f2" strokeWidth="2.6" />
            <path d="M5 .8L5.5 3.8L3.8 5.5L.8 5C1 7.3 4 8.5 6 7L7.5 5C8 3 7 1 5 .8Z" fill="#f2f2f2" />
          </svg>
        </button>
      </div>
      <div className="flex min-w-0 flex-1 flex-col bg-[#c8c8c8]">
        <div className="flex-1 pt-[5px] pl-[2px] whitespace-pre">
          <p>Select objects: 1 found</p>
          <p>Select objects:</p>
          <p>Specify base point:</p>
        </div>
        <div className="flex h-[21px] items-center border-t border-[#8b8b8b] bg-white pl-[9px] whitespace-pre">
          <svg width="6" height="14" viewBox="0 0 6 14" aria-hidden="true"><path d="M0 1L5 3.5L0 6Z" fill="#78a4dc" /></svg>
          <span className="mr-[5px] ml-[6px]"><Caret color="#777" /></span>
          <b className="mr-1">ROTATE</b>
          <label htmlFor="cmd">Specify rotation angle or [</label>
          <button className="rounded-[3px] bg-[#cfcfcf] px-px"><span className="text-[#1d1dc4]">C</span>opy</button>
          <button className="ml-1 rounded-[3px] bg-[#cfcfcf] px-px"><span className="text-[#1d1dc4]">R</span>eference</button>
          <span>{"] <0>:"}</span>
          <input id="cmd" className="min-w-0 flex-1 bg-transparent pl-1 outline-none" />
        </div>
      </div>
    </section>
  );
}

const statusBox = "flex h-6 shrink-0 items-center justify-center border border-[#757575] bg-[#4f4f4f]";

function StatusBar() {
  const tab = "h-[17px] [clip-path:polygon(0_0,100%_0,94%_80%,88%_100%,12%_100%,6%_80%)]";
  return (
    <footer className="flex h-[27px] shrink-0 items-start border-t border-[#5a5a5a] bg-[#373737] text-[11px] leading-4">
      <div className="flex pl-3">
        <button className={tab + " w-[53px] bg-linear-to-b from-[#777] to-[#8d8d8d] font-bold text-white"}>Model</button>
        <button className={tab + " w-[61px] bg-[#555] text-[#b9b9b9]"}>Layout1</button>
        <button className={tab + " w-[61px] bg-[#555] text-[#b9b9b9]"}>Layout2</button>
        <button aria-label="New layout" className="ml-[2px] flex h-4 w-[23px] items-center justify-center bg-[#505050] [clip-path:polygon(20%_0,100%_0,80%_100%,0_100%)]">
          <svg width="8" height="8" viewBox="0 0 8 8"><path d="M4 0V8M0 4H8" stroke="#bbb" strokeWidth="1.8" /></svg>
        </button>
      </div>
      <div className="mr-[5px] ml-auto flex gap-[2px]">
        <button className={statusBox + " w-[45px] font-semibold text-white"}>MODEL</button>
        <div className={statusBox + " w-[59px] gap-[6px]"}>
          <Svg><path d="M3 1V15M6.3 1V15M9.6 1V15M13 1V15" stroke="#d0d0d0" strokeWidth="1.2" /><path d="M1 3.5H15M1 6.5H15M1 9.5H15M1 12.5H15" stroke="#d0d0d0" strokeWidth="1" strokeDasharray="1.5 1.2" /></Svg>
          <Svg><path d="M1 2H15M1 5H15M1 8H15M1 11H15M1 14H15" stroke="#b5b5b5" strokeWidth="1.2" strokeDasharray="1.2 1.6" /></Svg>
          <Caret color="#fff" />
        </div>
        <div className={statusBox + " w-[23px]"}>
          <Svg><path d="M8.5 1.5H12.5V5.5H8.5ZM8.5 3V12" fill="none" stroke="#c9c9c9" strokeWidth="1.5" /><path d="M4 10H9V14.5H4Z" fill="#c9c9c9" /></Svg>
        </div>
        <div className="flex gap-px">
          <div className={statusBox + " w-[23px]"}>
            <Svg><path d="M4 1V8M.5 4.5H7.5" stroke="#c9c9c9" strokeWidth="1.3" /><path d="M6.5 9.5H15.5V13.5H6.5Z" fill="#c9c9c9" /></Svg>
          </div>
          <div className={statusBox + " w-[59px] gap-[7px]"}>
            <Svg><path d="M2.5 3V13.5H14.5M2.5 9C5 9 6.5 10.5 6.5 13.5" fill="none" stroke="#b8b8b8" strokeWidth="1.4" /></Svg>
            <Svg><circle cx="7" cy="8.5" r="5.5" fill="none" stroke="#b8b8b8" strokeWidth="1.4" /><path d="M7 8.5H15M12.5 6L15 8.5L12.5 11M7 8.5L12 3.5" fill="none" stroke="#b8b8b8" strokeWidth="1.3" /></Svg>
            <Caret color="#fff" />
          </div>
        </div>
        <div className={statusBox + " w-[23px]"}>
          <Svg><path d="M1 15L6 10L3 3L7.5 7L9 1L10 6.5L15 15L9 11.5L5 15ZM12 1L10.5 4H13L11 8" fill="#d4d4d4" stroke="#d4d4d4" strokeWidth=".7" /></Svg>
        </div>
        <div className={statusBox + " w-[38px] gap-[7px]"}>
          <Svg size={14}><circle cx="8" cy="8" r="3.8" fill="none" stroke="#d0d0d0" strokeWidth="3.4" /><circle cx="8" cy="8" r="6.2" fill="none" stroke="#d0d0d0" strokeWidth="2" strokeDasharray="2.5 2.37" /></Svg>
          <Caret color="#fff" />
        </div>
        <div className={statusBox + " w-6"}>
          <Svg><path d="M1.5 1.5H7.5V7.5H1.5ZM7.5 9L11 14.5H4Z" fill="none" stroke="#c9c9c9" strokeWidth="1.2" /><circle cx="12" cy="6" r="3" fill="none" stroke="#c9c9c9" strokeWidth="1.2" /></Svg>
        </div>
        <div className={statusBox + " w-6"}>
          <Svg size={18}><circle cx="8" cy="8" r="7.5" fill="#0c66c8" stroke="#0a4d97" /><path d="M7 10L11 7.5" stroke="#8fc2ff" strokeWidth="1.3" /></Svg>
        </div>
        <div className={statusBox + " w-7"}>
          <Svg size={18} box={18}><path d="M.5 2H17V16H.5Z" fill="#f0f0f0" /><path d="M1 13C5 13 5 5 8.5 5C12 5 12 13 16 13" fill="none" stroke="#222" strokeWidth="1.2" /><path d="M14 9L18 17H10.5Z" fill="#d2642a" /><path d="M14.2 11.5V14M14.2 15V16" stroke="#fff" /></Svg>
        </div>
        <div className={statusBox + " w-[42px] border-r-0"}>
          <div className="flex gap-[7px] pl-[3px]">
            <Svg><path d="M.8 2.5H15.2V13.5H.8Z" fill="none" stroke="#d5d5d5" strokeWidth="1.3" /><path d="M9 5H13V9ZM3 7.5V11.5H7Z" fill="#d5d5d5" /><path d="M12.5 5.5L9.5 8M3.5 11L6.5 8.5" stroke="#d5d5d5" strokeWidth="1.3" /></Svg>
            <Svg size={14}><path d="M0 3.5H16M0 8H16M0 12.5H16" stroke="#e0e0e0" strokeWidth="1.7" /></Svg>
          </div>
        </div>
      </div>
    </footer>
  );
}

const chrome = (
  <Svg size={20} box={20}>
    <circle cx="10" cy="10" r="9.8" fill="#f3c62d" />
    <path d="M10 10L1.4 5.2A9.8 9.8 0 0 1 18.8 5.7H10Z" fill="#dc4437" />
    <path d="M1.4 5.2A9.8 9.8 0 0 0 9.2 19.8L13.8 12.2L6.2 12Z" fill="#1f9d58" />
    <circle cx="10" cy="10" r="4.6" fill="#f4f4f4" />
    <circle cx="10" cy="10" r="3.6" fill="#4484ee" />
  </Svg>
);

const apps: { name: string; icon: React.ReactNode; open?: boolean; active?: boolean }[] = [
  { name: "Task view", icon: <Svg size={20} box={20}><path d="M5 3.5H15V16.5H5ZM3.5 5H1.2V15H3.5M16.5 5H18.8V15H16.5" fill="none" stroke="#d8d8d8" strokeWidth="1.3" /></Svg> },
  { name: "File Explorer", icon: <Svg size={21} box={20}><path d="M0 2.5H7L8.5 4.5H19.5V18H0Z" fill="#f6dc8c" /><path d="M4 10H16V18H13V13.5H7V18H4Z" fill="#3aa7dc" /></Svg> },
  { name: "Edge", icon: <FaEdgeLegacy size={20} color="#0a78d7" /> },
  { name: "Store", icon: <Svg size={21} box={20}><path d="M.5 7.5L13 5.500L19 6V19L14 20L.5 18Z" fill="#f6f6f6" /><path d="M5 7C5 -1 12 -.5 12 5.5M8 5C8.500 0 14.500 1 14 5.500" fill="none" stroke="#f6f6f6" strokeWidth="1.2" /><path d="M3.500 9.800L7 9.300V12.500H3.500ZM8 9.200L12 8.700V12.500H8ZM3.500 13.500H7V16.800L3.500 16.400ZM8 13.500H12V17.400L8 16.900Z" fill="#0b0b10" /></Svg> },
  { name: "Chrome", icon: chrome },
  { name: "Screen recorder", icon: <Svg size={23} box={22}><rect width="22" height="22" rx="2.5" fill="#2488ea" /><path d="M3.5 7V4H7M15 4H18.5V7M3.5 15V18H7M15 18H18.5V15M7 8.5H15M7 13.5H15M9 8.5V13.5M13 8.5V13.5" stroke="#e9f4ff" strokeWidth="1.5" fill="none" /></Svg> },
  { name: "Mail", icon: <Svg size={23} box={22}><path d="M0 9L11 2L22 9V19.5H0Z" fill="#fff" /><path d="M1 9H21L13 15L14 11.5Z" fill="#08080c" /></Svg> },
  { name: "Sticky Notes", open: true, icon: <Svg size={18} box={18}><path d="M.5 0H17.5V11L11 18H.5Z" fill="#f1de8e" /><path d="M17.5 11L11 18V11Z" fill="#7b7046" /></Svg> },
  { name: "AutoCAD", open: true, active: true, icon: <Svg size={23} box={22}><path d="M0 0H22V22H0Z" fill="#f5e4e2" /><path d="M3.5 18.5L9 3H13L18.5 17L14.5 18.5L13 14H8.5L7 18.5ZM9.5 11H12.5L11 6.5Z" fill="#b3262c" /></Svg> },
  { name: "Chrome window", open: true, icon: chrome },
  { name: "Paint", open: true, icon: <Svg size={23} box={22}><path d="M10 4C4 4 0 8 .5 13C1 17 4 17.5 6 16C8 15 9 16 8.5 18C9 21 17 20 19 14C21 8 17 4 10 4Z" fill="#c7e0f2" /><circle cx="5" cy="12" r="1.8" fill="#d9453b" /><circle cx="8" cy="8" r="1.6" fill="#55a84a" /><circle cx="13" cy="8" r="1.6" fill="#f0b93a" /><circle cx="15" cy="13" r="1.6" fill="#3d7bd0" /><path d="M18 1L21.5 3L12 20L10.5 20.5Z" fill="#c98a4c" /></Svg> },
];

function Taskbar() {
  return (
    <div className="flex h-[38px] shrink-0 bg-[#04050a]">
      <button aria-label="Start" className="flex w-[45px] shrink-0 items-center justify-center">
        <FaWindows size={16} color="#fff" />
      </button>
      <div className="flex w-[323px] shrink-0 items-center bg-[#333] pr-[14px] pl-[9px]">
        <span className="h-5 w-5 shrink-0 rounded-full border-[3px] border-[#f2f2f2]" />
        <input aria-label="Type here to search" placeholder="Type here to search" className="min-w-0 flex-1 bg-transparent pl-[9px] text-[13px] leading-5 outline-none placeholder:text-[#a8a8a8]" />
        <svg width="12" height="17" viewBox="0 0 12 17" aria-hidden="true"><rect x="3" y=".7" width="6" height="10" rx="1" fill="none" stroke="#c4c4c4" strokeWidth="1.2" /><path d="M.8 7V13H11.2V7M6 13V16M3.5 16H8.5" fill="none" stroke="#c4c4c4" strokeWidth="1.2" /></svg>
      </div>
      {apps.map((a) => (
        <button key={a.name} aria-label={a.name} className={"flex w-[46px] shrink-0 flex-col items-center justify-between " + (a.active ? "bg-[#34383f]" : "px-1")}>
          <span className="flex flex-1 items-center pt-px">{a.icon}</span>
          <span className={"h-[2px] w-full " + (a.open ? "bg-[#8fc3ee]" : "")} />
        </button>
      ))}
      <div className="ml-auto flex items-center text-white">
        <button aria-label="Show hidden icons" className="flex w-[23px] justify-center"><svg width="12" height="7" viewBox="0 0 12 7"><path d="M1 6L6 1L11 6" fill="none" stroke="#e8e8e8" strokeWidth="1.3" /></svg></button>
        <button aria-label="Stop recording" className="flex w-[23px] justify-center"><Svg size={15}><path d="M0 0H16V16H0Z" fill="#3c4358" /><path d="M4.5 4.5H11.5V11.5H4.5Z" fill="#fff" /></Svg></button>
        <button aria-label="Pause recording" className="flex w-[23px] justify-center"><Svg size={15}><path d="M0 0H16V16H0Z" fill="#3c4358" /><path d="M4.5 4H7V12H4.5ZM9 4H11.5V12H9Z" fill="#fff" /></Svg></button>
        <button aria-label="Network" className="flex w-[23px] justify-center"><Svg size={14}><path d="M2 14A12 12 0 0 1 14 2M5 14.5A9 9 0 0 1 14.5 5.5M8 14.5A6 6 0 0 1 14.5 8.5" fill="none" stroke="#c9c9cc" strokeWidth="1.3" /><circle cx="13" cy="13.5" r="1.8" fill="#fff" /></Svg></button>
        <button aria-label="Battery" className="flex w-[21px] justify-center"><Svg><path d="M4.5 5.5H14V12.5H4.5ZM14 7.5H15.5V10.5H14" fill="none" stroke="#e4e4e4" strokeWidth="1.2" /><path d="M9 7H12.5V11H6.5Z" fill="#e4e4e4" /><path d="M.8 3.5V6C.8 8 4.5 8 4.5 6V3.5ZM1.8 1.5V3.5M3.5 1.5V3.5M2.7 7.5V11H5" fill="none" stroke="#e4e4e4" strokeWidth="1.1" /></Svg></button>
        <button aria-label="Volume muted" className="flex w-[22px] justify-center"><Svg><path d="M1 5.5H3.5L7 2.5V13.5L3.5 10.5H1ZM10 6L14.5 10.5M14.5 6L10 10.5" fill="none" stroke="#e4e4e4" strokeWidth="1.2" /></Svg></button>
        <button className="flex w-[34px] justify-center text-[11px] leading-4">ENG</button>
        <time className="flex w-[66px] flex-col items-center text-[11px] leading-[17px]">
          <span>22:06</span>
          <span>23-08-2017</span>
        </time>
        <button aria-label="Notifications" className="flex w-[44px] justify-center pr-1"><Svg><path d="M.8 1.5H15.2V12.5H10L8 15L6 12.5H.8Z" fill="none" stroke="#e8e8e8" strokeWidth="1.3" /></Svg></button>
        <span className="h-[14px] w-[5px] bg-linear-to-b from-[#d77ab0] via-[#6fae5a] to-[#5c6fc0]" />
      </div>
    </div>
  );
}

export default function App() {
  return (
    <div className="flex h-screen flex-col overflow-hidden bg-[#5a5a5a] font-['Noto_Sans','Open_Sans',sans-serif]">
      <Header />
      <FileTabs />
      <Toolbar />
      <div className="flex min-h-0 flex-1">
        <div className="flex min-w-0 flex-1 flex-col">
          <div className="flex min-h-0 flex-1 pb-px">
            <div className="flex w-[54px] shrink-0 items-start gap-[3px]">
              <ToolColumn label="Draw" names={drawTools} className="h-[422px]" />
              <ToolColumn label="Modify" names={modifyTools} className="h-[381px]" />
            </div>
            <Canvas />
            <div className="flex w-[30px] shrink-0 items-start pl-1">
              <div role="toolbar" aria-label="Dimension" className="flex h-[470px] w-6 flex-col border border-[#404040] bg-[#5d5d5d] pt-[3px]">
                <Grip />
                {dimGroups.map((g, i) => (
                  <React.Fragment key={i}>
                    {i > 0 && <span className="mx-auto my-px h-[2px] w-[18px] shrink-0 bg-[#d8d8d8]" />}
                    {g.map((n) => (
                      <button key={n} aria-label={n} className="flex min-h-0 flex-1 items-center justify-center">
                        <Svg size={15}>{dims[n]}</Svg>
                      </button>
                    ))}
                  </React.Fragment>
                ))}
              </div>
            </div>
          </div>
          <CommandLine />
        </div>
        <div className="flex w-[18px] shrink-0 pt-1 pb-[3px] pl-[4px]">
          <div className="flex flex-1 flex-col items-center border border-[#454545] bg-linear-to-r from-[#6f6f6f] to-[#8e8e8e] pt-[2px]">
            <Grip />
            <span className="mt-[242px] rotate-180 text-[11px] leading-3 text-white [writing-mode:vertical-rl]">Properties</span>
          </div>
        </div>
        <div className="flex w-[5px] shrink-0 flex-col bg-black pt-[38px]">
          <span className="h-[36px] bg-[#a9a9a9]" />
          <span className="mt-auto h-[50px] bg-[#c8c8c8]" />
          <span className="h-[21px] border-t border-[#8b8b8b] bg-white" />
        </div>
      </div>
      <StatusBar />
      <Taskbar />
    </div>
  );
}
